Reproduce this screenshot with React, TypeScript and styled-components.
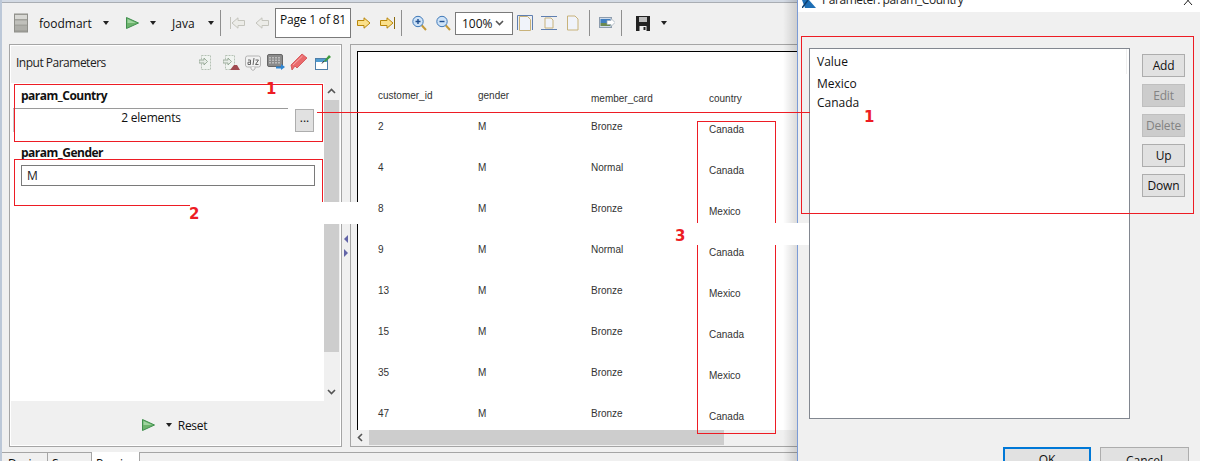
import styled, { createGlobalStyle } from 'styled-components'

const GlobalStyle = createGlobalStyle`
html, body {
  margin: 0;
  padding: 0;
  background: #fff;
}
* {
  box-sizing: border-box;
}
`

const uiFont = `"Open Sans", "Noto Sans", sans-serif`

const Screen = styled.div`
  position: relative;
  width: 1208px;
  height: 461px;
  overflow: hidden;
  background: #fff;
  font-family: ${uiFont};
  font-size: 12px;
  color: #111;
`
const Workbench = styled.div`
  width: 798px;
  height: 461px;
  background: #f0f0f0;
  border-left: 2px solid #bcc8d8;
  display: flex;
  flex-direction: column;
`
const TopBand = styled.div`
  height: 3px;
  background: #d3dae4;
  border-bottom: 1px solid #a9adb3;
`
const Toolbar = styled.div`
  height: 41px;
  display: flex;
  align-items: center;
  padding-left: 11px;
`
const Slot = styled.span<{ $ml?: number; $w?: number }>`
  margin-left: ${p => p.$ml ?? 0}px;
  width: ${p => (p.$w ? `${p.$w}px` : 'auto')};
  flex: none;
  display: inline-flex;
  align-items: center;
  white-space: nowrap;
`
const Caret = styled.span<{ $ml?: number }>`
  margin-left: ${p => p.$ml ?? 0}px;
  flex: none;
  width: 0;
  height: 0;
  border-left: 3.5px solid transparent;
  border-right: 3.5px solid transparent;
  border-top: 4px solid #222;
`
const ToolSep = styled.span<{ $ml: number }>`
  margin-left: ${p => p.$ml}px;
  flex: none;
  width: 1px;
  height: 26px;
  background: #8f8f8f;
`
const PageBox = styled.div`
  margin-left: 5px;
  flex: none;
  width: 76px;
  height: 30px;
  background: #fff;
  border: 1px solid #7a7a7a;
  text-align: center;
  line-height: 22px;
  font-size: 12px;
  letter-spacing: -0.2px;
`
const ZoomSelect = styled.div`
  margin-left: 4px;
  flex: none;
  width: 58px;
  height: 23px;
  background: #fff;
  border: 1px solid #7a7a7a;
  display: flex;
  align-items: center;
  justify-content: space-between;
  padding: 0 8px 0 6px;
  svg {
    display: block;
  }
`
const Main = styled.div`
  display: flex;
  height: 404px;
  padding-left: 7px;
`
const ParamPanel = styled.section`
  width: 333px;
  flex: none;
  border: 1px solid #a5a5a5;
  box-shadow: inset 0 0 0 1px #fff;
  padding: 1px;
  display: flex;
  flex-direction: column;
`
const PanelHeader = styled.header`
  height: 37px;
  display: flex;
  align-items: center;
  padding: 0 0 4px 5px;
`
const PanelTitle = styled.h2`
  margin: 0;
  width: 183px;
  font-weight: 400;
  font-size: 12px;
  letter-spacing: -0.5px;
  color: #222;
`
const ParamArea = styled.div`
  height: 318px;
  display: flex;
`
const ParamList = styled.div`
  width: 313px;
  background: #fff;
  padding-left: 10px;
`
const ParamName = styled.div<{ $mt: number }>`
  margin-top: ${p => p.$mt}px;
  height: 16px;
  line-height: 16px;
  font-weight: 700;
  font-size: 12px;
  letter-spacing: -0.5px;
`
const CountryRow = styled.div`
  display: flex;
  align-items: flex-start;
  margin: 4px 0 0 -8px;
`
const ElementsBox = styled.div`
  width: 275px;
  height: 24px;
  border-top: 1px solid #9a9a9a;
  border-left: 1px solid #c9c9c9;
  text-align: center;
  line-height: 17px;
  font-size: 12px;
  letter-spacing: -0.2px;
`
const DotsButton = styled.button`
  margin: 1px 0 0 7px;
  padding: 0 0 4px;
  width: 19px;
  height: 23px;
  background: #e1e1e1;
  border: 1px solid #adadad;
  font: 12px ${uiFont};
  line-height: 1;
  color: #111;
`
const GenderInput = styled.div`
  margin-top: 4px;
  width: 294px;
  height: 21px;
  border: 1px solid #7a7a7a;
  padding-left: 5px;
  line-height: 19px;
  font-size: 12px;
  color: #222;
`
const VScroll = styled.div`
  width: 15px;
  display: flex;
  flex-direction: column;
  align-items: center;
`
const ScrollEnd = styled.div<{ $h: number; $bottom?: boolean }>`
  height: ${p => p.$h}px;
  flex: none;
  display: flex;
  align-items: ${p => (p.$bottom ? 'flex-end' : 'center')};
  padding-bottom: ${p => (p.$bottom ? 6 : 0)}px;
  justify-content: center;
`
const VThumb = styled.div`
  width: 15px;
  height: 252px;
  flex: none;
  background: #cdcdcd;
`
const ResetRow = styled.div`
  flex: 1;
  display: flex;
  align-items: center;
  justify-content: center;
  padding-top: 5px;
  padding-right: 2px;
`
const ResetLabel = styled.span`
  margin-left: 6px;
  font-size: 12px;
  letter-spacing: -0.3px;
`
const Sash = styled.div`
  width: 8px;
  flex: none;
  display: flex;
  flex-direction: column;
  align-items: center;
  padding-top: 191px;
  gap: 6px;
`
const SashArrow = styled.span<{ $dir: 'left' | 'right' }>`
  width: 0;
  height: 0;
  border-top: 4px solid transparent;
  border-bottom: 4px solid transparent;
  border-${p => (p.$dir === 'left' ? 'right' : 'left')}: 4px solid #6264a7;
`
const ReportPanel = styled.section`
  flex: 1;
  border: 1px solid #a5a5a5;
  border-right: none;
  display: flex;
  flex-direction: column;
  padding-top: 6px;
`
const ReportPage = styled.div`
  margin-left: 6px;
  height: 379px;
  background: #fff;
  border-left: 1px solid #000;
  border-top: 1px solid #000;
  padding: 33px 0 0 20px;
`
const ReportGrid = styled.div`
  display: grid;
  grid-template-columns: 100px 113px 118px 80px;
  grid-template-rows: 21px repeat(8, 41px);
  font-family: "Liberation Sans", Arial, sans-serif;
  font-size: 10px;
  color: #333;
`
const Cell = styled.div<{ $drop?: number }>`
  display: flex;
  align-items: center;
  padding-top: ${p => p.$drop ?? 0}px;
`
const HScroll = styled.div`
  height: 15px;
  display: flex;
`
const HButton = styled.div`
  width: 18px;
  display: flex;
  align-items: center;
  justify-content: center;
`
const HThumb = styled.div`
  width: 355px;
  background: #cdcdcd;
`
const BottomTabs = styled.div`
  margin-top: 5px;
  height: 9px;
  border-top: 1px solid #a5a5a5;
  display: flex;
`
const EditorTab = styled.div<{ $w: number; $pl: number; $active?: boolean }>`
  width: ${p => p.$w}px;
  height: 20px;
  margin-top: ${p => (p.$active ? -1 : 0)}px;
  padding-left: ${p => p.$pl}px;
  background: ${p => (p.$active ? '#fff' : 'transparent')};
  border-right: 1px solid #a5a5a5;
  line-height: ${p => (p.$active ? 23 : 21)}px;
  font-size: 12px;
  letter-spacing: -0.2px;
`
const TabStrip = styled.div`
  height: 8px;
  display: flex;
  overflow: hidden;
`
const Shade = styled.div`
  position: absolute;
  left: 783px;
  top: 0;
  width: 14px;
  height: 461px;
  background: linear-gradient(to right, rgba(0, 0, 0, 0), rgba(0, 0, 0, 0.14));
`
const Dialog = styled.div`
  position: absolute;
  left: 797px;
  top: 0;
  width: 403px;
  height: 461px;
  border-left: 1px solid #7b9bd6;
  background: #f0f0f0;
`
const DialogTitle = styled.div`
  height: 12px;
  background: #fff;
  display: flex;
  align-items: flex-start;
  overflow: hidden;
  padding-left: 4px;
`
const TitleText = styled.span`
  margin: -8px 0 0 6px;
  line-height: 16px;
  white-space: nowrap;
  font-size: 12px;
  letter-spacing: -0.45px;
  color: #222;
`
const TitleClose = styled.span`
  margin-left: auto;
  margin-right: 7px;
  display: flex;
`
const DialogBody = styled.div`
  display: flex;
  padding: 36px 0 0 11px;
`
const ValueList = styled.div`
  width: 321px;
  height: 371px;
  background: #fff;
  border: 1px solid #828790;
`
const ValueHead = styled.div`
  height: 25px;
  padding-left: 7px;
  line-height: 26px;
  font-size: 12px;
  border-right: 1px solid #efefef;
  margin-right: 2px;
`
const ValueRow = styled.div`
  height: 19px;
  padding-left: 7px;
  line-height: 19px;
  font-size: 12px;
`
const SideButtons = styled.div`
  margin: 6px 0 0 12px;
  display: flex;
  flex-direction: column;
  gap: 7px;
`
const SideButton = styled.button<{ $off?: boolean }>`
  width: 43px;
  height: 23px;
  padding: 0;
  background: ${p => (p.$off ? '#cccccc' : '#e1e1e1')};
  border: 1px solid ${p => (p.$off ? '#bfbfbf' : '#adadad')};
  color: ${p => (p.$off ? '#838383' : '#111')};
  font: 12px ${uiFont};
  letter-spacing: -0.2px;
`
const DialogFooter = styled.div`
  margin-top: 28px;
  display: flex;
  justify-content: flex-end;
  gap: 9px;
  padding-right: 11px;
`
const FooterButton = styled.button<{ $primary?: boolean }>`
  width: ${p => (p.$primary ? 88 : 89)}px;
  height: 24px;
  padding: ${p => (p.$primary ? '1px 0 0' : '2px 0 0')};
  background: #e1e1e1;
  border: ${p => (p.$primary ? '2px solid #0078d7' : '1px solid #adadad')};
  font: 12px ${uiFont};
  color: #111;
`
const Mark = styled.div<{ $x: number; $y: number; $w: number; $h: number }>`
  position: absolute;
  left: ${p => p.$x}px;
  top: ${p => p.$y}px;
  width: ${p => p.$w}px;
  height: ${p => p.$h}px;
  border: 1px solid #ed1c24;
`
const MarkLine = styled.div`
  position: absolute;
  left: 317px;
  top: 112px;
  width: 493px;
  height: 1px;
  background: #ed1c24;
`
const WhiteStrip = styled.div<{ $x: number; $y: number; $w: number; $h: number }>`
  position: absolute;
  left: ${p => p.$x}px;
  top: ${p => p.$y}px;
  width: ${p => p.$w}px;
  height: ${p => p.$h}px;
  background: #fff;
`
const MarkLabel = styled.span<{ $x: number; $y: number }>`
  position: absolute;
  left: ${p => p.$x}px;
  top: ${p => p.$y}px;
  font: 700 15px/18px "DejaVu Sans", sans-serif;
  color: #ed1c24;
`

const rows = [
  ['2', 'M', 'Bronze', 'Canada'],
  ['4', 'M', 'Normal', 'Canada'],
  ['8', 'M', 'Bronze', 'Mexico'],
  ['9', 'M', 'Normal', 'Canada'],
  ['13', 'M', 'Bronze', 'Mexico'],
  ['15', 'M', 'Bronze', 'Canada'],
  ['35', 'M', 'Bronze', 'Mexico'],
  ['47', 'M', 'Bronze', 'Canada'],
]

const Database = () => (
  <svg width="16" height="20" viewBox="0 0 16 20">
    <rect x="1.5" y="1" width="13" height="18" fill="#a2a29c" stroke="#8f8f8a" />
    <rect x="2" y="2" width="12" height="4" fill="#d8d8d4" />
    <rect x="2" y="7.5" width="12" height="4" fill="#c0c0bb" />
    <rect x="2" y="13" width="12" height="4" fill="#aeaea9" />
  </svg>
)
const Play = () => (
  <svg width="13" height="12" viewBox="0 0 13 12">
    <path d="M.5.5 12.5 6 .5 11.5z" fill="#6db36d" stroke="#3f8f4d" />
    <path d="M1.5 2 1.5 6 10 6z" fill="#9fd59f" />
  </svg>
)
const Arrow = ({ flip, bar, on }: { flip?: boolean; bar?: boolean; on?: boolean }) => (
  <svg width="15" height="12" viewBox="0 0 15 12" style={{ transform: flip ? 'scaleX(-1)' : undefined }}>
    <path
      d={bar ? 'M.5 3.5h6.5V.8L13 6 7 11.2V8.5H.5z' : 'M1.5 3.5H8V.8L14 6 8 11.2V8.5H1.5z'}
      fill={on ? '#fbe08a' : '#ececE8'}
      stroke={on ? '#b8860b' : '#c4c4bc'}
    />
    {bar && <path d="M14.5 0v12" stroke={on ? '#8a6a10' : '#c4c4bc'} />}
  </svg>
)
const ZoomGlass = ({ plus }: { plus?: boolean }) => (
  <svg width="15" height="16" viewBox="0 0 15 16">
    <path d="m9.5 10 4.5 5" stroke="#c49a3a" strokeWidth="2" />
    <circle cx="6" cy="6.5" r="5.2" fill="#cfe3f7" stroke="#3f79b8" />
    <path d={plus ? 'M3.5 6.5h5M6 4v5' : 'M3.5 6.5h5'} stroke="#1f4f90" strokeWidth="1.4" />
  </svg>
)
const Chevron = ({ up }: { up?: boolean }) => (
  <svg width="9" height="6" viewBox="0 0 9 6">
    <path d={up ? 'M1 5 4.5 1.5 8 5' : 'M1 1l3.5 3.5L8 1'} fill="none" stroke="#555" strokeWidth="1.6" />
  </svg>
)
const Sheet = ({ variant }: { variant: 'page' | 'width' | 'actual' }) => (
  <svg width="16" height="16" viewBox="0 0 16 16">
    {variant === 'page' && <path d="M.5 15V.5h15V15" fill="none" stroke="#5f7fb0" />}
    {variant === 'width' && <path d="M0 1.5h16M0 14.5h16" stroke="#5f7fb0" />}
    <path
      d={variant === 'page' ? 'M2.5 15.5v-14h8l3 3v11z' : variant === 'width' ? 'M4 13V3h6l2 2v8z' : 'M2.5 15V1h7.5l3 3v11z'}
      fill="#f0f3fa"
      stroke="#c8b27a"
    />
  </svg>
)
const ExportImage = () => (
  <svg width="16" height="12" viewBox="0 0 16 12">
    <rect x=".5" y=".5" width="12" height="10" fill="#cfdcec" stroke="#8d9cad" />
    <rect x="1.5" y="2" width="10" height="4" fill="#3f7ec0" />
    <rect x="1.5" y="6" width="10" height="3" fill="#6c8a50" />
    <path d="M8 3.5h4V1.5L16 5.5l-4 4V7.5H8z" fill="#fff" stroke="#9aa7b5" strokeWidth=".7" />
  </svg>
)
const Floppy = () => (
  <svg width="14" height="15" viewBox="0 0 14 15">
    <path d="M0 0h14v15H0z" fill="#222" />
    <rect x="3" y="1" width="8" height="5" fill="#bdbdbd" />
    <rect x="3.5" y="10" width="7" height="5" fill="#eee" />
    <rect x="7.5" y="11" width="2" height="3" fill="#222" />
  </svg>
)
const DocIn = ({ flag }: { flag?: boolean }) => (
  <svg width="17" height="17" viewBox="0 0 17 17">
    <path d="M2.5 1.5h9v14h-9z" fill="#f0f4f0" stroke="#b6c2b6" strokeDasharray="2 1" />
    <path d="M0 6h5V4l3.5 3.5L5 11V9H0z" fill="#e6ece6" stroke="#8aa08a" strokeWidth=".8" />
    {flag && <path d="M7 16 11 11h3l3 5z" fill="#a04a50" />}
  </svg>
)
const AzIcon = () => (
  <svg width="16" height="17" viewBox="0 0 16 17">
    <rect x=".5" y="2" width="15" height="11" rx="2" fill="#f2f2f2" stroke="#b4b4b4" />
    <path d="M6 13v2l2 1.5 2-1.5v-2" fill="#f2f2f2" stroke="#b4b4b4" />
    <path d="M3 6h2.5v4.5H3V8.2h2.5M8 11l1-7M10.5 6h3l-3 4.5h3" fill="none" stroke="#666" />
  </svg>
)
const Keys = () => (
  <svg width="18" height="16" viewBox="0 0 18 16">
    <rect x=".5" y=".5" width="15" height="12" rx="1.5" fill="#8a8a8a" stroke="#666" />
    <path d="M3 3v7M6 3v7M9 3v7M12 3v7" stroke="#f0f0f0" strokeDasharray="1.5 1" />
    <path d="M9 12.5h5V10l4 3-4 3v-1.5H9z" fill="#2f86d2" />
  </svg>
)
const Eraser = () => (
  <svg width="18" height="18" viewBox="0 0 18 18">
    <path d="M12 1 17 5 7 15 5 13 2 17l-1-5z" fill="#ea6a6c" stroke="#d04a4e" strokeWidth=".8" />
    <path d="M12.5 3 3 12" stroke="#f6aaaa" />
  </svg>
)
const Pin = () => (
  <svg width="16" height="16" viewBox="0 0 16 16">
    <rect x=".5" y="4.5" width="12" height="11" fill="#fff" stroke="#4f7ea8" />
    <rect x="1" y="5" width="11" height="3" fill="#4f9bd0" />
    <path d="m9 7 5-6 2 2-6 5z" fill="#3f9a3f" />
    <path d="M9 7 7 9.5" stroke="#333" />
  </svg>
)
const BirtLogo = () => (
  <svg width="14" height="8" viewBox="0 0 14 8">
    <path d="M0 0h7l7 8H3z" fill="#1f6fb5" />
    <path d="M0 8l6-8" stroke="#0d3f70" strokeWidth="1.5" />
  </svg>
)
const CloseMark = () => (
  <svg width="10" height="6" viewBox="0 0 10 6">
    <path d="M1-4 9 5M9-4 1 5" stroke="#222" fill="none" />
  </svg>
)

export default function App() {
  return (
    <Screen>
      <GlobalStyle />
      <Workbench>
        <TopBand />
        <Toolbar>
          <Slot><Database /></Slot>
          <Slot $ml={10} $w={50}>foodmart</Slot>
          <Caret $ml={14} />
          <Slot $ml={17}><Play /></Slot>
          <Caret $ml={11} />
          <Slot $ml={16} $w={22}>Java</Slot>
          <Caret $ml={14} />
          <ToolSep $ml={6} />
          <Slot $ml={9}><Arrow flip bar /></Slot>
          <Slot $ml={10}><Arrow flip /></Slot>
          <PageBox>Page 1 of 81</PageBox>
          <Slot $ml={5}><Arrow on /></Slot>
          <Slot $ml={9}><Arrow on bar /></Slot>
          <ToolSep $ml={6} />
          <Slot $ml={10}><ZoomGlass plus /></Slot>
          <Slot $ml={9}><ZoomGlass /></Slot>
          <ZoomSelect>100%<Chevron /></ZoomSelect>
          <Slot $ml={4}><Sheet variant="page" /></Slot>
          <Slot $ml={8}><Sheet variant="width" /></Slot>
          <Slot $ml={8}><Sheet variant="actual" /></Slot>
          <ToolSep $ml={8} />
          <Slot $ml={9}><ExportImage /></Slot>
          <ToolSep $ml={6} />
          <Slot $ml={14}><Floppy /></Slot>
          <Caret $ml={11} />
        </Toolbar>
        <Main>
          <ParamPanel>
            <PanelHeader>
              <PanelTitle>Input Parameters</PanelTitle>
              <Slot><DocIn /></Slot>
              <Slot $ml={7}><DocIn flag /></Slot>
              <Slot $ml={5}><AzIcon /></Slot>
              <Slot $ml={6}><Keys /></Slot>
              <Slot $ml={5}><Eraser /></Slot>
              <Slot $ml={7}><Pin /></Slot>
            </PanelHeader>
            <ParamArea>
              <ParamList>
                <ParamName $mt={5}>param_Country</ParamName>
                <CountryRow>
                  <ElementsBox>2 elements</ElementsBox>
                  <DotsButton>...</DotsButton>
                </CountryRow>
                <ParamName $mt={13}>param_Gender</ParamName>
                <GenderInput>M</GenderInput>
              </ParamList>
              <VScroll>
                <ScrollEnd $h={17}><Chevron up /></ScrollEnd>
                <VThumb />
                <ScrollEnd $h={49} $bottom><Chevron /></ScrollEnd>
              </VScroll>
            </ParamArea>
            <ResetRow>
              <Play />
              <Caret $ml={11} />
              <ResetLabel>Reset</ResetLabel>
            </ResetRow>
          </ParamPanel>
          <Sash>
            <SashArrow $dir="left" />
            <SashArrow $dir="right" />
          </Sash>
          <ReportPanel>
            <ReportPage>
              <ReportGrid>
                <Cell>customer_id</Cell>
                <Cell>gender</Cell>
                <Cell $drop={7}>member_card</Cell>
                <Cell $drop={7}>country</Cell>
                {rows.map(row =>
                  row.map((value, i) => (
                    <Cell key={`${row[0]}-${i}`} $drop={i === 3 ? 6 : 0}>{value}</Cell>
                  ))
                )}
              </ReportGrid>
            </ReportPage>
            <HScroll>
              <HButton><svg width="6" height="9" viewBox="0 0 6 9"><path d="M5 1 1.5 4.5 5 8" fill="none" stroke="#555" strokeWidth="1.6" /></svg></HButton>
              <HThumb />
            </HScroll>
          </ReportPanel>
        </Main>
        <BottomTabs>
          <TabStrip>
            <EditorTab $w={46} $pl={6}>Design</EditorTab>
            <EditorTab $w={44} $pl={4}>Source</EditorTab>
          </TabStrip>
          <EditorTab $w={48} $pl={4} $active>Preview</EditorTab>
        </BottomTabs>
      </Workbench>

      <Shade />
      <Dialog>
        <DialogTitle>
          <BirtLogo />
          <TitleText>Parameter: param_Country</TitleText>
          <TitleClose><CloseMark /></TitleClose>
        </DialogTitle>
        <DialogBody>
          <ValueList>
            <ValueHead>Value</ValueHead>
            <ValueRow>Mexico</ValueRow>
            <ValueRow>Canada</ValueRow>
          </ValueList>
          <SideButtons>
            <SideButton>Add</SideButton>
            <SideButton $off>Edit</SideButton>
            <SideButton $off>Delete</SideButton>
            <SideButton>Up</SideButton>
            <SideButton>Down</SideButton>
          </SideButtons>
        </DialogBody>
        <DialogFooter>
          <FooterButton $primary>OK</FooterButton>
          <FooterButton>Cancel</FooterButton>
        </DialogFooter>
      </Dialog>

      <Mark $x={14} $y={84} $w={309} $h={58} />
      <Mark $x={14} $y={159} $w={309} $h={47} />
      <Mark $x={697} $y={121} $w={79} $h={313} />
      <Mark $x={801} $y={36} $w={393} $h={178} />
      <MarkLine />
      <WhiteStrip $x={190} $y={202} $w={168} $h={22} />
      <WhiteStrip $x={690} $y={223} $w={119} $h={22} />
      <MarkLabel $x={266} $y={80}>1</MarkLabel>
      <MarkLabel $x={189} $y={205}>2</MarkLabel>
      <MarkLabel $x={675} $y={227}>3</MarkLabel>
      <MarkLabel $x={864} $y={108}>1</MarkLabel>
    </Screen>
  )
}
